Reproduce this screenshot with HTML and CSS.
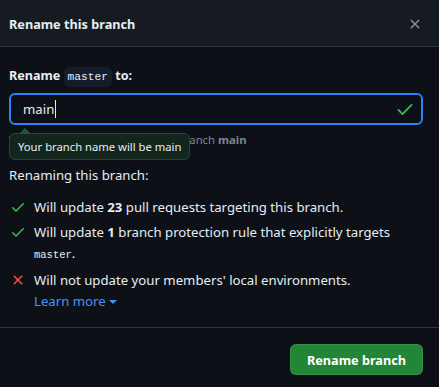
FILE: index.html
```html
<!DOCTYPE html>
<html lang="en">
<head>
<meta charset="utf-8">
<title>Rename this branch</title>
<link rel="stylesheet" href="styles.css">
</head>
<body>
<div class="dialog">
  <header class="dialog-header">
    <h1 class="dialog-title">Rename this branch</h1>
    <button class="close-btn" aria-label="Close">
      <svg width="16" height="16" viewBox="0 0 16 16"><path fill="currentColor" d="M3.72 3.72a.75.75 0 0 1 1.06 0L8 6.94l3.22-3.22a.749.749 0 0 1 1.275.326.749.749 0 0 1-.215.734L9.06 8l3.22 3.22a.749.749 0 0 1-.326 1.275.749.749 0 0 1-.734-.215L8 9.06l-3.22 3.22a.751.751 0 0 1-1.042-.018.751.751 0 0 1-.018-1.042L6.94 8 3.72 4.78a.75.75 0 0 1 0-1.06Z"/></svg>
    </button>
  </header>
  <div class="dialog-body">
    <label class="field-label">Rename <code class="code-pill">master</code> to:</label>
    <div class="input-wrap">
      <div class="text-input"><span>main</span><span class="caret"></span></div>
      <svg class="input-check" width="20" height="20" viewBox="0 0 16 16"><path fill="currentColor" d="M13.78 4.22a.75.75 0 0 1 0 1.06l-7.25 7.25a.75.75 0 0 1-1.06 0L2.22 9.28a.751.751 0 0 1 .018-1.042.751.751 0 0 1 1.042-.018L6 10.94l6.72-6.72a.75.75 0 0 1 1.06 0Z"/></svg>
    </div>
    <div class="note-wrap">
      <p class="note">Your branch will be renamed to branch <strong>main</strong></p>
      <div class="tooltip">Your branch name will be main</div>
    </div>
    <p class="section-title">Renaming this branch:</p>
    <ul class="effects">
      <li class="effect">
        <svg class="icon ok" width="16" height="16" viewBox="0 0 16 16"><path fill="currentColor" d="M13.78 4.22a.75.75 0 0 1 0 1.06l-7.25 7.25a.75.75 0 0 1-1.06 0L2.22 9.28a.751.751 0 0 1 .018-1.042.751.751 0 0 1 1.042-.018L6 10.94l6.72-6.72a.75.75 0 0 1 1.06 0Z"/></svg>
        <span>Will update <strong>23</strong> pull requests targeting this branch.</span>
      </li>
      <li class="effect">
        <svg class="icon ok" width="16" height="16" viewBox="0 0 16 16"><path fill="currentColor" d="M13.78 4.22a.75.75 0 0 1 0 1.06l-7.25 7.25a.75.75 0 0 1-1.06 0L2.22 9.28a.751.751 0 0 1 .018-1.042.751.751 0 0 1 1.042-.018L6 10.94l6.72-6.72a.75.75 0 0 1 1.06 0Z"/></svg>
        <span>Will update <strong>1</strong> branch protection rule that explicitly targets <code class="mono">master</code>.</span>
      </li>
      <li class="effect">
        <svg class="icon bad" width="16" height="16" viewBox="0 0 16 16"><path fill="currentColor" d="M3.72 3.72a.75.75 0 0 1 1.06 0L8 6.94l3.22-3.22a.749.749 0 0 1 1.275.326.749.749 0 0 1-.215.734L9.06 8l3.22 3.22a.749.749 0 0 1-.326 1.275.749.749 0 0 1-.734-.215L8 9.06l-3.22 3.22a.751.751 0 0 1-1.042-.018.751.751 0 0 1-.018-1.042L6.94 8 3.72 4.78a.75.75 0 0 1 0-1.06Z"/></svg>
        <span>Will not update your members' local environments.<br><a class="learn-more" href="#">Learn more <span class="caret-down"></span></a></span>
      </li>
    </ul>
  </div>
  <footer class="dialog-footer">
    <button class="btn-primary">Rename branch</button>
  </footer>
</div>
</body>
</html>
```
FILE: styles.css
```css
* { box-sizing: border-box; }
html, body { margin: 0; padding: 0; }
body {
  background: #0d1117;
  color: #e6edf3;
  font-family: "Noto Sans", "Liberation Sans", sans-serif;
  font-size: 13.2px;
  width: 439px;
  height: 387px;
  overflow: hidden;
}
.dialog { display: flex; flex-direction: column; height: 387px; }
.dialog-header {
  height: 52px;
  background: #161b22;
  border-bottom: 1px solid #30363d;
  display: flex;
  align-items: center;
  justify-content: space-between;
  padding: 1px 16px 0 9px;
}
.dialog-title { margin: 0; font-size: 12.7px; font-weight: 700; line-height: 20px; }
.close-btn {
  background: none; border: 0; padding: 0; color: #848d97;
  width: 16px; height: 16px; display: flex;
}
.dialog-body { padding: 19px 16px 15px 9px; }
.field-label { display: block; font-weight: 700; font-size: 12.6px; line-height: 20px; margin-bottom: 6px; }
.code-pill {
  font-family: "Liberation Mono", "DejaVu Sans Mono", monospace;
  font-weight: 400;
  font-size: 11.2px;
  background: #161d2a;
  border-radius: 6px;
  padding: 4px 4px;
}
.input-wrap { position: relative; }
.text-input {
  height: 32px;
  border: 2px solid #2f81f7;
  border-radius: 6px;
  background: #0d1117;
  display: flex;
  align-items: center;
  padding: 0 12px;
  font-size: 13.2px;
}
.caret { width: 1px; height: 18px; background: #e6edf3; margin-left: 1px; }
.input-check { position: absolute; right: 8px; top: 6px; color: #3fb950; }
.note-wrap { position: relative; }
.note { margin: 6px 0 0; font-size: 11.3px; line-height: 18px; color: #7d8590; }
.note strong { color: #7d8590; }
.tooltip {
  position: absolute;
  left: 0; top: 2px;
  height: 27px;
  padding: 0 8px;
  display: flex; align-items: center;
  font-size: 11.25px;
  color: #e6edf3;
  background: #12261e;
  border: 1px solid #1d4d2b;
  border-radius: 6px;
}
.tooltip::before {
  content: "";
  position: absolute;
  left: 9px; top: -6px;
  border-left: 6px solid transparent;
  border-right: 6px solid transparent;
  border-bottom: 6px solid #1f5a30;
}
.section-title { margin: 16px 0 0; line-height: 20px; }
.effects { list-style: none; margin: 12px 0 0; padding: 0; display: flex; flex-direction: column; gap: 4px; }
.effect { display: flex; gap: 8px; line-height: 21px; }
.icon { flex: none; margin-top: 2px; margin-left: 1px; }
.ok { color: #3fb950; }
.bad { color: #f85149; }
.mono { font-family: "Liberation Mono", "DejaVu Sans Mono", monospace; font-size: 10.5px; }
.learn-more { color: #4493f8; text-decoration: none; }
.caret-down {
  display: inline-block;
  border-left: 4px solid transparent;
  border-right: 4px solid transparent;
  border-top: 4px solid #4493f8;
  vertical-align: middle;
}
.dialog-footer {
  margin-top: auto;
  border-top: 1px solid #30363d;
  padding: 16px 16px 12px;
  display: flex;
  justify-content: flex-end;
}
.btn-primary {
  height: 31px;
  padding: 0 16px;
  background: #238636;
  color: #ffffff;
  border: 1px solid rgba(240,246,252,0.1);
  border-radius: 6px;
  font-family: inherit;
  font-size: 12.7px;
  font-weight: 700;
}
```
